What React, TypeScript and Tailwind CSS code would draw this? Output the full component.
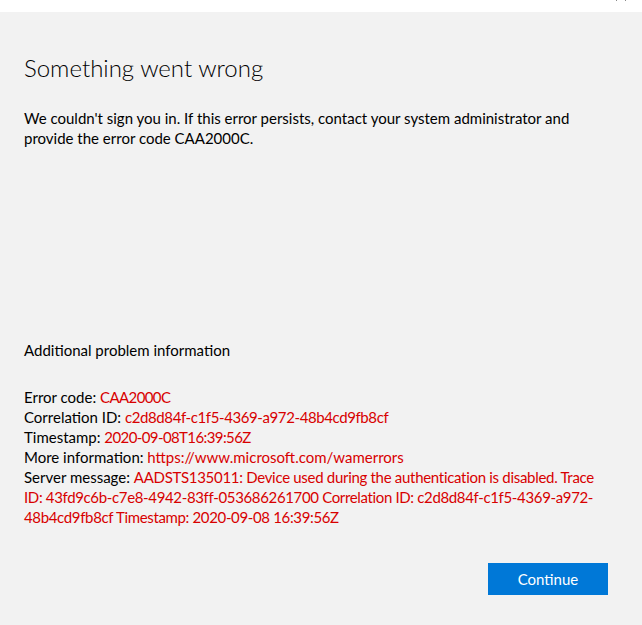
const FONT = "font-['Lato',sans-serif]";
const RED = "text-[#d80000]";

export default function App() {
  return (
    <div className={`w-[642px] h-[625px] bg-[#f2f2f2] flex flex-col text-[#000] ${FONT}`}>
      {/* title bar strip, close glyph clipped off the top */}
      <div className="relative h-[12px] bg-white overflow-hidden shrink-0">
        <svg className="absolute left-[615px] top-[-10px]" width="12" height="12" viewBox="0 0 12 12">
          <path d="M1 1 L11 11 M11 1 L1 11" stroke="#8a8a8a" strokeWidth="1" fill="none" />
        </svg>
      </div>

      <div className="px-6 pt-10 flex flex-col">
        <h1 className="text-[24px] leading-[32px] font-light">Something went wrong</h1>
        <p className="mt-6 text-[15px] leading-[20px]">
          We couldn't sign you in. If this error persists, contact your system administrator and
          <br />
          provide the error code CAA2000C.
        </p>

        <p className="mt-[192px] text-[15px] leading-[20px]">Additional problem information</p>

        <div className="mt-[27px] text-[15px] leading-[20px] whitespace-nowrap">
          <div>
            Error code: <span className={`${RED} tracking-[-0.6px]`}>CAA2000C</span>
          </div>
          <div>
            Correlation ID:{" "}
            <span className={`${RED} tracking-[-0.4px]`}>c2d8d84f-c1f5-4369-a972-48b4cd9fb8cf</span>
          </div>
          <div>
            Timestamp: <span className={`${RED} tracking-[-0.6px]`}>2020-09-08T16:39:56Z</span>
          </div>
          <div>
            More information: <span className={RED}>https://www.microsoft.com/wamerrors</span>
          </div>
          <div>
            Server message:{" "}
            <span className={`${RED} tracking-[-0.3px]`}>
              AADSTS135011: Device used during the authentication is disabled. Trace
            </span>
          </div>
          <div className={`${RED} tracking-[-0.35px]`}>
            ID: 43fd9c6b-c7e8-4942-83ff-053686261700 Correlation ID: c2d8d84f-c1f5-4369-a972-
          </div>
          <div className={`${RED} tracking-[-0.35px]`}>
            48b4cd9fb8cf Timestamp: 2020-09-08 16:39:56Z
          </div>
        </div>

        <div className="mt-[36px] flex justify-end pr-[10px]">
          <button
            type="button"
            className="w-[120px] h-[32px] bg-[#0078d7] text-white text-[15px] leading-[20px]"
          >
            Continue
          </button>
        </div>
      </div>
    </div>
  );
}
